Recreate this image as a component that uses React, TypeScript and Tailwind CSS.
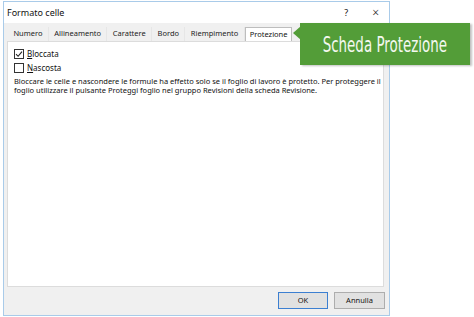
import React from 'react';

const tabs = ['Numero', 'Allineamento', 'Carattere', 'Bordo', 'Riempimento', 'Protezione'];

function Check({ checked, accel, rest }: { checked: boolean; accel: string; rest: string }) {
  return (
    <div className="flex items-center h-[14px]">
      <div className="w-[10px] h-[10px] border border-[#333] bg-white flex items-center justify-center">
        {checked && (
          <svg width="8" height="8" viewBox="0 0 8 8">
            <path d="M1 4.2 L3.1 6.3 L7 1.6" fill="none" stroke="#222" strokeWidth="1.1" />
          </svg>
        )}
      </div>
      <span className="ml-[3px] text-[8px] text-[#111]">
        <span className="underline">{accel}</span>
        {rest}
      </span>
    </div>
  );
}

export default function App() {
  return (
    <div className="relative w-[474px] h-[317px] bg-white overflow-hidden font-['Noto_Sans',sans-serif]">
      {/* finestra di dialogo */}
      <div className="ml-[3px] mt-[1px] w-[387px] h-[315px] border border-[#a9cbe9] bg-[#f0f0f0] flex flex-col">
        <div className="h-[21px] bg-white flex items-center pl-[3px] pr-[10px] text-[#111]">
          <span className="text-[9px]">Formato celle</span>
          <span className="ml-auto text-[9px]">?</span>
          <span className="ml-[24px] text-[12px] leading-none font-light">×</span>
        </div>

        <div className="flex items-end h-[17px] pl-[4px] mt-[1px]">
          {tabs.map((t) => (
            <div
              key={t}
              className={
                t === 'Protezione'
                  ? 'h-[14px] px-[4px] border border-[#bdbdbd] border-b-0 bg-white text-[7.5px] flex items-center text-[#111]'
                  : 'h-[14px] px-[5.4px] text-[7.5px] flex items-center text-[#222] border-r border-[#e6e6e6]'
              }
            >
              {t}
            </div>
          ))}
        </div>

        <div className="mx-[3px] mr-[5px] h-[246px] bg-white border border-[#dcdcdc] pl-[6px] pt-[5px]">
          <Check checked accel="B" rest="loccata" />
          <Check checked={false} accel="N" rest="ascosta" />
          <p className="mt-[2px] text-[7.5px] leading-[9px] text-[#111]">
            Bloccare le celle e nascondere le formule ha effetto solo se il foglio di lavoro è protetto. Per proteggere il
            <br />
            foglio utilizzare il pulsante Proteggi foglio nel gruppo Revisioni della scheda Revisione.
          </p>
        </div>

        <div className="flex justify-end gap-[6px] pr-[4px] mt-[5px]">
          <button className="w-[50px] h-[17px] bg-[#e1e1e1] border border-[#3c7fd1] text-[7.5px] text-[#111]">OK</button>
          <button className="w-[51px] h-[17px] bg-[#e1e1e1] border border-[#adadad] text-[7.5px] text-[#111]">Annulla</button>
        </div>
      </div>

      {/* etichetta verde */}
      <div className="absolute left-[300px] top-[23px] w-[170px] h-[42px] bg-[#539d38] shadow-[2px_1px_2px_rgba(0,0,0,0.25)] flex items-center justify-center">
        <svg className="absolute left-[-7px] top-[3px]" width="8" height="14" viewBox="0 0 8 14">
          <polygon points="8,0 0,7 8,14" fill="#539d38" />
        </svg>
        <span className="text-[#f4f8f0] text-[22px] font-['DejaVu_Sans',sans-serif] whitespace-nowrap scale-x-[0.61] inline-block">
          Scheda Protezione
        </span>
      </div>
    </div>
  );
}
